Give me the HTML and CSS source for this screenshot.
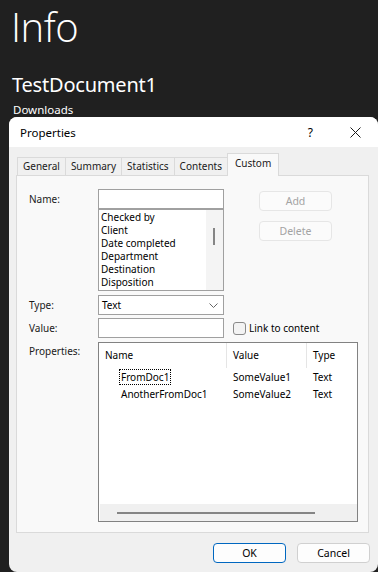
FILE: index.html
```html
<!DOCTYPE html>
<html>
<head>
<meta charset="utf-8">
<link rel="stylesheet" href="styles.css">
</head>
<body>
<div class="page">
  <div class="info">Info</div>
  <div class="docname">TestDocument1</div>
  <div class="location">Downloads</div>
  <div class="dialog">
    <div class="titlebar">
      <span class="title">Properties</span>
      <span class="help">?</span>
      <svg class="close" width="11" height="11" viewBox="0 0 11 11"><path d="M0.5 0.5L10.5 10.5M10.5 0.5L0.5 10.5" stroke="#1a1a1a" stroke-width="1" fill="none"/></svg>
    </div>
    <div class="body">
      <div class="tabs">
        <div class="tab">General</div>
        <div class="tab">Summary</div>
        <div class="tab">Statistics</div>
        <div class="tab">Contents</div>
        <div class="tab active">Custom</div>
      </div>
      <div class="panel">
        <div class="row name-row">
          <div class="label name-label">Name:</div>
          <div class="name-stack">
            <div class="field"></div>
            <div class="listbox">
              <div class="items">
                <div>Checked by</div>
                <div>Client</div>
                <div>Date completed</div>
                <div>Department</div>
                <div>Destination</div>
                <div>Disposition</div>
              </div>
              <div class="vscroll"><div class="vthumb"></div></div>
            </div>
          </div>
          <div class="side-buttons">
            <div class="btn disabled">Add</div>
            <div class="btn disabled">Delete</div>
          </div>
        </div>
        <div class="row">
          <div class="label">Type:</div>
          <div class="field select">
            <span>Text</span>
            <span class="chev"><svg width="9" height="5" viewBox="0 0 9 5"><path d="M0.5 0.5L4.5 4.5L8.5 0.5" stroke="#666" stroke-width="1" fill="none"/></svg></span>
          </div>
        </div>
        <div class="row value-row">
          <div class="label">Value:</div>
          <div class="field"></div>
          <div class="check"><span class="box"></span><span>Link to content</span></div>
        </div>
        <div class="row props-row">
          <div class="label props-label">Properties:</div>
          <div class="listview">
            <div class="lv-head">
              <div class="col c1">Name</div>
              <div class="col c2">Value</div>
              <div class="col c3">Type</div>
            </div>
            <div class="lv-row">
              <div class="col c1"><span class="focus">FromDoc1</span></div>
              <div class="col c2">SomeValue1</div>
              <div class="col c3">Text</div>
            </div>
            <div class="lv-row">
              <div class="col c1"><span class="plain">AnotherFromDoc1</span></div>
              <div class="col c2">SomeValue2</div>
              <div class="col c3">Text</div>
            </div>
            <div class="lv-fill"></div>
            <div class="hscroll"><div class="hthumb"></div></div>
          </div>
        </div>
      </div>
      <div class="footer">
        <div class="btn primary">OK</div>
        <div class="btn">Cancel</div>
      </div>
    </div>
  </div>
</div>
</body>
</html>
```

FILE: styles.css
```css
html, body {
  margin: 0;
  padding: 0;
}
body {
  background: #202020;
  font-family: "Noto Sans", "Open Sans", sans-serif;
}
.page {
  width: 378px;
  height: 572px;
  overflow: hidden;
  background: #202020;
  color: #ffffff;
  display: flex;
  flex-direction: column;
}
.info {
  font-family: "Open Sans", "Noto Sans", sans-serif;
  font-weight: 300;
  font-size: 40px;
  line-height: 40px;
  margin: 7px 0 0 11px;
  letter-spacing: -0.5px;
}
.docname {
  font-size: 20px;
  line-height: 24px;
  margin: 26px 0 0 12px;
  letter-spacing: -0.2px;
}
.location {
  font-size: 11.5px;
  line-height: 14px;
  margin: 6px 0 0 13px;
}
.dialog {
  margin: 0 0 0 9px;
  width: 369px;
  height: 455px;
  flex: none;
  background: #f0f0f0;
  border-radius: 8px;
  overflow: hidden;
  color: #000;
  font-size: 10px;
}
.titlebar {
  height: 30px;
  background: #ffffff;
  display: flex;
  align-items: center;
}
.title {
  margin-left: 11px;
  font-size: 11.5px;
  flex: 1;
}
.help {
  font-size: 12px;
  margin-right: 37px;
}
.close {
  margin-right: 17px;
}
.body {
  padding: 7px 9px 0 7px;
}
.tabs {
  display: flex;
  align-items: flex-end;
  height: 21px;
  padding-left: 1px;
  position: relative;
  z-index: 1;
}
.tab {
  height: 17px;
  line-height: 17px;
  padding: 0 5px;
  border: 1px solid #dadada;
  border-bottom: none;
  border-right: none;
  background: #f0f0f0;
  color: #1a1a1a;
}
.tab.active {
  background: #f9f9f9;
  border-right: 1px solid #dadada;
  padding: 0 7px;
  line-height: 18px;
  margin-bottom: -1px;
  height: 22px;
}
.panel {
  height: 358px;
  border: 1px solid #dadada;
  background: #f9f9f9;
  padding: 13px 0 0 12px;
  box-sizing: border-box;
}
.row {
  display: flex;
  align-items: center;
  margin-top: 4px;
}
.name-row {
  margin-top: 0;
  align-items: flex-start;
}
.value-row {
  margin-top: 3px;
}
.label {
  width: 69px;
  flex: none;
  color: #1a1a1a;
}
.name-label {
  padding-top: 3px;
}
.name-stack {
  width: 126px;
  display: flex;
  flex-direction: column;
}
.field {
  width: 126px;
  height: 20px;
  box-sizing: border-box;
  border: 1px solid #a0a0a0;
  background: #ffffff;
}
.listbox {
  height: 82px;
  box-sizing: border-box;
  border: 1px solid #a0a0a0;
  background: #ffffff;
  display: flex;
}
.items {
  flex: 1;
  padding: 1px 0 0 2px;
  line-height: 13px;
  white-space: nowrap;
}
.vscroll {
  width: 17px;
  background: #f4f4f4;
}
.vthumb {
  margin: 18px 0 0 7px;
  width: 2px;
  height: 17px;
  background: #858585;
}
.side-buttons {
  margin-left: 35px;
  margin-top: 2px;
  display: flex;
  flex-direction: column;
  gap: 10px;
}
.btn {
  width: 73px;
  height: 20px;
  box-sizing: border-box;
  border: 1px solid #d0d0d0;
  border-radius: 4px;
  background: #fdfdfd;
  display: flex;
  align-items: center;
  justify-content: center;
  font-size: 10.5px;
}
.btn.disabled {
  color: #a3a3a3;
  border-color: #e6e6e6;
  background: #fbfbfb;
}
.btn.primary {
  border-color: #0067c0;
}
.select {
  display: flex;
  align-items: center;
  justify-content: space-between;
  padding-left: 3px;
}
.chev {
  width: 17px;
  height: 18px;
  display: flex;
  align-items: center;
  justify-content: center;
  margin-right: 1px;
}
.check {
  display: flex;
  align-items: center;
  margin-left: 9px;
}
.box {
  width: 13px;
  height: 13px;
  box-sizing: border-box;
  border: 1px solid #8a8a8a;
  border-radius: 3px;
  background: #f3f3f3;
  margin-right: 3px;
}
.props-row {
  align-items: flex-start;
}
.props-label {
  padding-top: 2px;
}
.listview {
  width: 260px;
  height: 180px;
  box-sizing: border-box;
  border: 1px solid #828282;
  background: #ffffff;
  display: flex;
  flex-direction: column;
}
.lv-head {
  height: 25px;
  display: flex;
  align-items: center;
}
.lv-head .col {
  height: 25px;
  line-height: 25px;
  border-right: 1px solid #e5e5e5;
}
.lv-head .c3 {
  border-right: none;
}
.col {
  box-sizing: border-box;
  padding-left: 6px;
  white-space: nowrap;
}
.c1 { width: 128px; }
.c2 { width: 80px; }
.c3 { flex: 1; }
.lv-row {
  height: 17px;
  display: flex;
  align-items: center;
}
.lv-row .c1 {
  padding-left: 20px;
}
.focus, .plain {
  display: inline-block;
  border: 1px dotted #000;
  padding: 0 1px;
  line-height: 14px;
}
.plain {
  border-color: transparent;
}
.lv-fill {
  flex: 1;
}
.hscroll {
  height: 17px;
  background: #f0f0f0;
  display: flex;
  align-items: center;
  margin-left: 1px;
}
.hthumb {
  margin-left: 17px;
  width: 198px;
  height: 2px;
  background: #858585;
}
.footer {
  display: flex;
  justify-content: flex-end;
  gap: 11px;
  margin-top: 10px;
  margin-right: -1px;
}
```
